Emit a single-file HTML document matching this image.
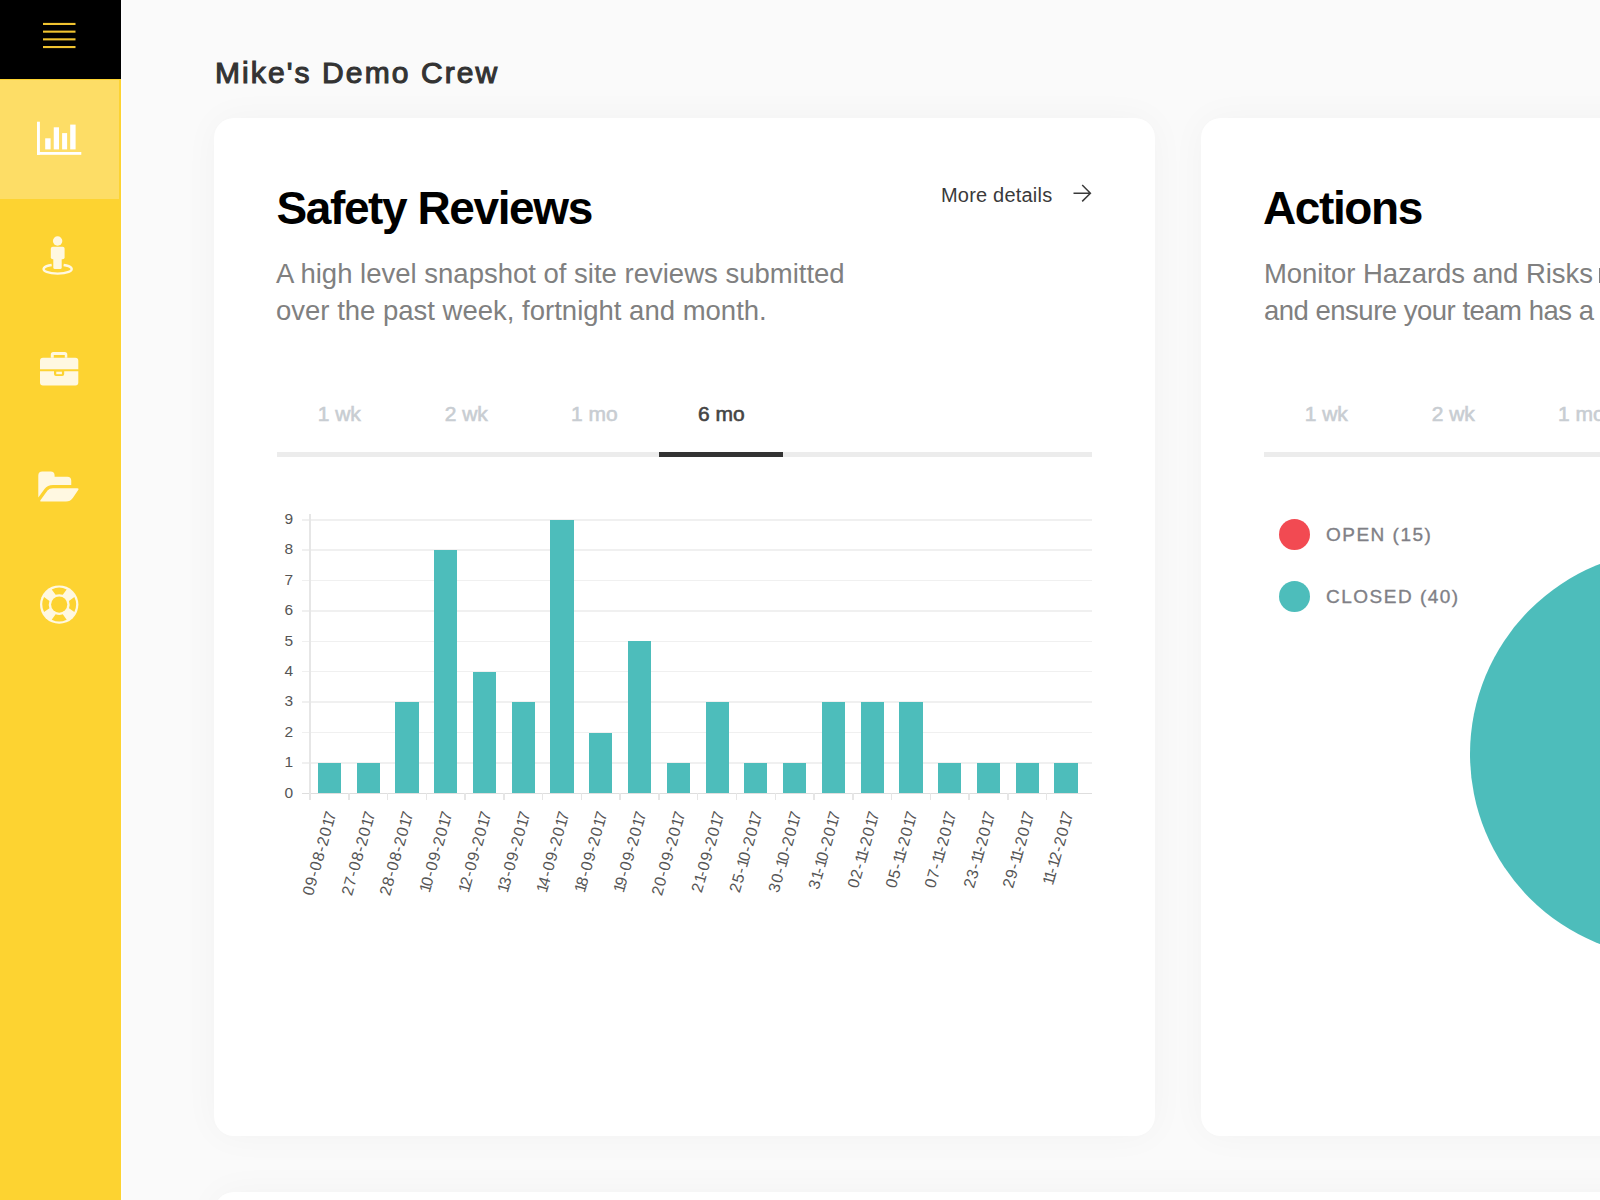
<!DOCTYPE html>
<html><head><meta charset="utf-8">
<style>
html,body{margin:0;padding:0;width:1600px;height:1200px;overflow:hidden;background:#fafafa;font-family:"Liberation Sans",sans-serif;}
.abs{position:absolute;white-space:nowrap;}
#side{position:absolute;left:0;top:0;width:121px;height:1200px;background:#FDD331;}
#side .top{position:absolute;left:0;top:0;width:121px;height:79px;background:#000;}
#side .hl{position:absolute;left:0;top:80px;width:119px;height:119px;background:#FDDD66;}
#edge{position:absolute;left:121px;top:0;width:2px;height:1200px;background:#fcfcfd;}
.card{position:absolute;background:#fff;border-radius:20px;box-shadow:0 0 36px rgba(0,0,0,0.035);}
.ttl{position:absolute;white-space:nowrap;font-size:46px;font-weight:700;letter-spacing:-1.4px;color:#000;line-height:46px;}
.desc{position:absolute;white-space:nowrap;font-size:27.5px;line-height:37px;color:#808080;}
.tab{position:absolute;width:160px;text-align:center;font-size:21px;line-height:20px;letter-spacing:0px;font-weight:400;color:#c8cdd2;-webkit-text-stroke:0.6px #c8cdd2;white-space:nowrap;}
.tab.on{color:#444;-webkit-text-stroke:0.6px #444;}
.tline{position:absolute;height:4.6px;background:#ececec;}
.bar{position:absolute;background:#4DBDBB;}
.yl{position:absolute;left:243px;width:50px;text-align:right;font-size:15.5px;line-height:15px;color:#555;margin-top:-1.4px;}
.xl{position:absolute;width:200px;height:20px;line-height:20px;text-align:right;font-size:16px;letter-spacing:0.9px;color:#555;transform-origin:200px 10px;transform:rotate(-74deg);white-space:nowrap;}
.leg{position:absolute;left:1326px;font-size:19px;line-height:19px;letter-spacing:1.5px;color:#808086;-webkit-text-stroke:0.35px #808086;white-space:nowrap;}
.xl i{font-style:normal;letter-spacing:-2.4px;}
.dot{position:absolute;width:31px;height:31px;border-radius:50%;}
</style></head>
<body>
<div id="side">
  <div class="top"></div>
  <div class="hl"></div>
</div>
<div id="edge"></div>
<svg style="position:absolute;left:0;top:0" width="121" height="700" viewBox="0 0 121 700">
  <g fill="#F0C330">
    <rect x="43" y="22.9" width="32.5" height="2.1"/>
    <rect x="43" y="30.6" width="32.5" height="2.1"/>
    <rect x="43" y="38.3" width="32.5" height="2.1"/>
    <rect x="43" y="46" width="32.5" height="2.1"/>
  </g>
  <g fill="#fff">
    <rect x="37" y="121.7" width="2.9" height="33.1"/>
    <rect x="37" y="152" width="44.3" height="2.8"/>
    <rect x="45.2" y="138.3" width="5.4" height="11.1"/>
    <rect x="53.75" y="127.3" width="5.25" height="22.1"/>
    <rect x="62.1" y="133.1" width="5" height="16.3"/>
    <rect x="70.2" y="124.6" width="5.4" height="24.8"/>
  </g>
  <g fill="#FFF8E1">
    <circle cx="57.6" cy="241" r="4.7"/>
    <rect x="50.8" y="246.7" width="13.8" height="12.5" rx="2"/>
    <rect x="53.3" y="256" width="8.4" height="13" rx="1.5"/>
    <path d="M51.7,265 A14.1,4.5 0 1 0 63.6,265" fill="none" stroke="#FFF8E1" stroke-width="2.4"/>
  </g>
  <g fill="#FFF8E1">
    <path fill-rule="evenodd" d="M50.8,357.7 L50.8,354.4 Q50.8,351.9 53.3,351.9 L64.8,351.9 Q67.3,351.9 67.3,354.4 L67.3,357.7 Z M53.75,355 L53.75,357.7 L64.8,357.7 L64.8,355 Z"/>
    <path d="M40,369.2 L40,360.7 Q40,357.7 43,357.7 L75.3,357.7 Q78.3,357.7 78.3,360.7 L78.3,369.2 Z"/>
    <path d="M40,371.25 L54,371.25 L54,374 Q54,376 56,376 L62.2,376 Q64.2,376 64.2,374 L64.2,371.25 L78.3,371.25 L78.3,382.4 Q78.3,385.4 75.3,385.4 L43,385.4 Q40,385.4 40,382.4 Z"/>
    <rect x="56.25" y="371.7" width="5.65" height="2.5"/>
  </g>
  <g fill="#FFF8E1">
    <path d="M38.3,475.6 Q38.3,471.6 42.3,471.6 L50.6,471.6 Q54.6,471.6 54.6,475.6 L54.6,476.8 L67.3,476.8 Q71.25,476.8 71.25,480.8 L71.25,485 L53,485 Q47.5,485 44.5,489 L38.3,497.5 Z"/>
    <path d="M41.6,501.6 Q39.4,501.6 40.6,499.9 L47.5,490.6 Q49.5,488.25 53,488.25 L77.4,488.25 Q79.3,488.25 78.2,489.9 L72.8,498 Q70.3,501.6 66,501.6 Z"/>
  </g>
  <circle cx="59.2" cy="604.6" r="19.2" fill="#FFF8E1"/>
  <path d="M51.71,589.45 A16.9,16.9 0 0 1 66.69,589.45 L62.76,594.83 A10.4,10.4 0 0 0 55.64,594.83 Z" fill="#FDD331" transform="rotate(0 59.2 604.6)"/><path d="M51.71,589.45 A16.9,16.9 0 0 1 66.69,589.45 L62.76,594.83 A10.4,10.4 0 0 0 55.64,594.83 Z" fill="#FDD331" transform="rotate(90 59.2 604.6)"/><path d="M51.71,589.45 A16.9,16.9 0 0 1 66.69,589.45 L62.76,594.83 A10.4,10.4 0 0 0 55.64,594.83 Z" fill="#FDD331" transform="rotate(180 59.2 604.6)"/><path d="M51.71,589.45 A16.9,16.9 0 0 1 66.69,589.45 L62.76,594.83 A10.4,10.4 0 0 0 55.64,594.83 Z" fill="#FDD331" transform="rotate(270 59.2 604.6)"/>
  <circle cx="59.2" cy="604.6" r="8.1" fill="#FDD331"/>
</svg>

<div class="abs" style="left:215px;top:58.2px;font-size:30px;line-height:30px;font-weight:400;letter-spacing:2.1px;color:#333;-webkit-text-stroke:1.1px #333">Mike's Demo Crew</div>

<!-- card 1 -->
<div class="card" style="left:214px;top:118px;width:941px;height:1018px"></div>
<div class="ttl" style="left:276.5px;top:185.3px">Safety Reviews</div>
<div class="abs" style="left:941px;top:184.9px;font-size:20px;line-height:20px;letter-spacing:0.2px;color:#3a3a3a">More details</div>
<svg style="position:absolute;left:1070px;top:182px" width="25" height="24" viewBox="1070 182 25 24">
  <path d="M1073.5,193.2 L1090.3,193.2 M1082.2,185 L1090.4,193.2 L1082.2,201.4" fill="none" stroke="#3a3a3a" stroke-width="1.5"/>
</svg>
<div class="desc" style="left:276px;top:255.4px">A high level snapshot of site reviews submitted<br>over the past week, fortnight and month.</div>
<div class="tab" style="left:259.25px;top:404.3px">1 wk</div>
<div class="tab" style="left:386.25px;top:404.3px">2 wk</div>
<div class="tab" style="left:514.4px;top:404.3px">1 mo</div>
<div class="tab on" style="left:641.25px;top:404.3px">6 mo</div>
<div class="tline" style="left:277px;top:452.3px;width:815px"></div>
<div style="position:absolute;left:659px;top:452.3px;width:124.2px;height:4.6px;background:#333"></div>
<div style="position:absolute;left:302px;top:792.55px;width:790px;height:1.5px;background:#dedede"></div>
<div class="yl" style="top:786.00px">0</div>
<div style="position:absolute;left:302px;top:762.16px;width:790px;height:1.5px;background:#f0f0f0"></div>
<div class="yl" style="top:755.61px">1</div>
<div style="position:absolute;left:302px;top:731.77px;width:790px;height:1.5px;background:#f0f0f0"></div>
<div class="yl" style="top:725.22px">2</div>
<div style="position:absolute;left:302px;top:701.38px;width:790px;height:1.5px;background:#f0f0f0"></div>
<div class="yl" style="top:694.84px">3</div>
<div style="position:absolute;left:302px;top:670.99px;width:790px;height:1.5px;background:#f0f0f0"></div>
<div class="yl" style="top:664.45px">4</div>
<div style="position:absolute;left:302px;top:640.61px;width:790px;height:1.5px;background:#f0f0f0"></div>
<div class="yl" style="top:634.06px">5</div>
<div style="position:absolute;left:302px;top:610.22px;width:790px;height:1.5px;background:#f0f0f0"></div>
<div class="yl" style="top:603.67px">6</div>
<div style="position:absolute;left:302px;top:579.83px;width:790px;height:1.5px;background:#f0f0f0"></div>
<div class="yl" style="top:573.28px">7</div>
<div style="position:absolute;left:302px;top:549.44px;width:790px;height:1.5px;background:#f0f0f0"></div>
<div class="yl" style="top:542.89px">8</div>
<div style="position:absolute;left:302px;top:519.05px;width:790px;height:1.5px;background:#f0f0f0"></div>
<div class="yl" style="top:512.50px">9</div>
<div style="position:absolute;left:309.25px;top:514.4px;width:1.5px;height:285.6px;background:#e6e6e6"></div>
<div style="position:absolute;left:348.02px;top:793.3px;width:1.5px;height:6.5px;background:#e6e6e6"></div>
<div style="position:absolute;left:386.80px;top:793.3px;width:1.5px;height:6.5px;background:#e6e6e6"></div>
<div style="position:absolute;left:425.57px;top:793.3px;width:1.5px;height:6.5px;background:#e6e6e6"></div>
<div style="position:absolute;left:464.34px;top:793.3px;width:1.5px;height:6.5px;background:#e6e6e6"></div>
<div style="position:absolute;left:503.12px;top:793.3px;width:1.5px;height:6.5px;background:#e6e6e6"></div>
<div style="position:absolute;left:541.89px;top:793.3px;width:1.5px;height:6.5px;background:#e6e6e6"></div>
<div style="position:absolute;left:580.67px;top:793.3px;width:1.5px;height:6.5px;background:#e6e6e6"></div>
<div style="position:absolute;left:619.44px;top:793.3px;width:1.5px;height:6.5px;background:#e6e6e6"></div>
<div style="position:absolute;left:658.21px;top:793.3px;width:1.5px;height:6.5px;background:#e6e6e6"></div>
<div style="position:absolute;left:696.99px;top:793.3px;width:1.5px;height:6.5px;background:#e6e6e6"></div>
<div style="position:absolute;left:735.76px;top:793.3px;width:1.5px;height:6.5px;background:#e6e6e6"></div>
<div style="position:absolute;left:774.53px;top:793.3px;width:1.5px;height:6.5px;background:#e6e6e6"></div>
<div style="position:absolute;left:813.31px;top:793.3px;width:1.5px;height:6.5px;background:#e6e6e6"></div>
<div style="position:absolute;left:852.08px;top:793.3px;width:1.5px;height:6.5px;background:#e6e6e6"></div>
<div style="position:absolute;left:890.86px;top:793.3px;width:1.5px;height:6.5px;background:#e6e6e6"></div>
<div style="position:absolute;left:929.63px;top:793.3px;width:1.5px;height:6.5px;background:#e6e6e6"></div>
<div style="position:absolute;left:968.40px;top:793.3px;width:1.5px;height:6.5px;background:#e6e6e6"></div>
<div style="position:absolute;left:1007.18px;top:793.3px;width:1.5px;height:6.5px;background:#e6e6e6"></div>
<div style="position:absolute;left:1045.95px;top:793.3px;width:1.5px;height:6.5px;background:#e6e6e6"></div>
<div class="bar" style="left:317.79px;top:762.91px;width:23.2px;height:29.79px"></div>
<div class="xl" style="left:131.89px;top:800.50px">09-08-20<i>1</i>7</div>
<div class="bar" style="left:356.56px;top:762.91px;width:23.2px;height:29.79px"></div>
<div class="xl" style="left:170.66px;top:800.50px">27-08-20<i>1</i>7</div>
<div class="bar" style="left:395.33px;top:702.13px;width:23.2px;height:90.57px"></div>
<div class="xl" style="left:209.43px;top:800.50px">28-08-20<i>1</i>7</div>
<div class="bar" style="left:434.11px;top:550.19px;width:23.2px;height:242.51px"></div>
<div class="xl" style="left:248.21px;top:800.50px"><i>1</i>0-09-20<i>1</i>7</div>
<div class="bar" style="left:472.88px;top:671.74px;width:23.2px;height:120.96px"></div>
<div class="xl" style="left:286.98px;top:800.50px"><i>1</i>2-09-20<i>1</i>7</div>
<div class="bar" style="left:511.66px;top:702.13px;width:23.2px;height:90.57px"></div>
<div class="xl" style="left:325.76px;top:800.50px"><i>1</i>3-09-20<i>1</i>7</div>
<div class="bar" style="left:550.43px;top:519.80px;width:23.2px;height:272.90px"></div>
<div class="xl" style="left:364.53px;top:800.50px"><i>1</i>4-09-20<i>1</i>7</div>
<div class="bar" style="left:589.20px;top:732.52px;width:23.2px;height:60.18px"></div>
<div class="xl" style="left:403.30px;top:800.50px"><i>1</i>8-09-20<i>1</i>7</div>
<div class="bar" style="left:627.98px;top:641.36px;width:23.2px;height:151.34px"></div>
<div class="xl" style="left:442.08px;top:800.50px"><i>1</i>9-09-20<i>1</i>7</div>
<div class="bar" style="left:666.75px;top:762.91px;width:23.2px;height:29.79px"></div>
<div class="xl" style="left:480.85px;top:800.50px">20-09-20<i>1</i>7</div>
<div class="bar" style="left:705.52px;top:702.13px;width:23.2px;height:90.57px"></div>
<div class="xl" style="left:519.62px;top:800.50px">2<i>1</i>-09-20<i>1</i>7</div>
<div class="bar" style="left:744.30px;top:762.91px;width:23.2px;height:29.79px"></div>
<div class="xl" style="left:558.40px;top:800.50px">25-<i>1</i>0-20<i>1</i>7</div>
<div class="bar" style="left:783.07px;top:762.91px;width:23.2px;height:29.79px"></div>
<div class="xl" style="left:597.17px;top:800.50px">30-<i>1</i>0-20<i>1</i>7</div>
<div class="bar" style="left:821.84px;top:702.13px;width:23.2px;height:90.57px"></div>
<div class="xl" style="left:635.94px;top:800.50px">3<i>1</i>-<i>1</i>0-20<i>1</i>7</div>
<div class="bar" style="left:860.62px;top:702.13px;width:23.2px;height:90.57px"></div>
<div class="xl" style="left:674.72px;top:800.50px">02-<i>1</i><i>1</i>-20<i>1</i>7</div>
<div class="bar" style="left:899.39px;top:702.13px;width:23.2px;height:90.57px"></div>
<div class="xl" style="left:713.49px;top:800.50px">05-<i>1</i><i>1</i>-20<i>1</i>7</div>
<div class="bar" style="left:938.17px;top:762.91px;width:23.2px;height:29.79px"></div>
<div class="xl" style="left:752.27px;top:800.50px">07-<i>1</i><i>1</i>-20<i>1</i>7</div>
<div class="bar" style="left:976.94px;top:762.91px;width:23.2px;height:29.79px"></div>
<div class="xl" style="left:791.04px;top:800.50px">23-<i>1</i><i>1</i>-20<i>1</i>7</div>
<div class="bar" style="left:1015.71px;top:762.91px;width:23.2px;height:29.79px"></div>
<div class="xl" style="left:829.81px;top:800.50px">29-<i>1</i><i>1</i>-20<i>1</i>7</div>
<div class="bar" style="left:1054.49px;top:762.91px;width:23.2px;height:29.79px"></div>
<div class="xl" style="left:868.59px;top:800.50px"><i>1</i><i>1</i>-<i>1</i>2-20<i>1</i>7</div>

<!-- card 2 -->
<div class="card" style="left:1201px;top:118px;width:941px;height:1018px"></div>
<div class="ttl" style="left:1263px;top:185.3px">Actions</div>
<div class="desc" style="left:1264px;top:255.4px"><span style="letter-spacing:-0.05px">Monitor Hazards and Risks</span><br><span style="letter-spacing:-0.5px">and ensure your team has a</span></div>
<div style="position:absolute;left:1598.8px;top:268px;width:2px;height:15.4px;background:#808080"></div>
<div class="tab" style="left:1246.25px;top:404.3px">1 wk</div>
<div class="tab" style="left:1373.25px;top:404.3px">2 wk</div>
<div class="tab" style="left:1501.4px;top:404.3px">1 mo</div>
<div class="tline" style="left:1264px;top:452.3px;width:400px"></div>
<div class="dot" style="left:1279px;top:519.1px;background:#F24A52"></div>
<div class="dot" style="left:1279px;top:580.9px;background:#4DBDBB"></div>
<div class="leg" style="top:525.4px">OPEN (15)</div>
<div class="leg" style="top:587.2px">CLOSED (40)</div>
<div style="position:absolute;left:1470px;top:550px;width:408px;height:408px;border-radius:50%;background:#4DBDBB"></div>

<!-- card 3 -->
<div class="card" style="left:214px;top:1192px;width:1500px;height:600px"></div>
</body></html>
